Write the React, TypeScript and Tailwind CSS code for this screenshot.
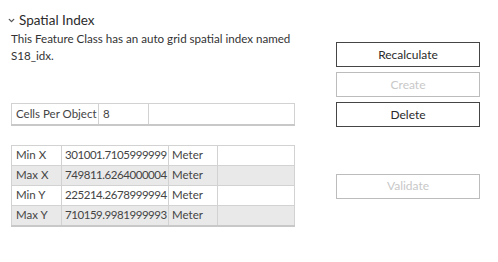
import { ChevronDown } from 'lucide-react';

const extents = [
  { label: 'Min X', value: '301001.7105999999', unit: 'Meter' },
  { label: 'Max X', value: '749811.6264000004', unit: 'Meter' },
  { label: 'Min Y', value: '225214.2678999994', unit: 'Meter' },
  { label: 'Max Y', value: '710159.9981999993', unit: 'Meter' },
];

function Btn({ label, disabled }: { label: string; disabled?: boolean }) {
  return (
    <button
      disabled={disabled}
      className={
        disabled
          ? 'h-[25px] w-[144px] border border-[#bcbcbc] bg-white text-[12px] text-[#c8c8c8]'
          : 'h-[25px] w-[144px] border border-[#454545] bg-white text-[12px] text-[#2b2b2b]'
      }
    >
      {label}
    </button>
  );
}

export default function App() {
  return (
    <div className="h-[262px] w-[498px] bg-white text-[#333] [font-family:Lato,sans-serif]">
      <div className="flex h-[30px] items-center pl-[7px] pt-[10px]">
        <ChevronDown className="h-[9px] w-[9px] text-[#555]" strokeWidth={3.5} />
        <span className="ml-[3px] text-[13.5px] leading-[18px] text-[#2b2b2b]">Spatial Index</span>
      </div>
      <div className="flex">
        <div className="ml-[11px] w-[284px]">
          <p className="h-[34px] w-[300px] text-[11.6px] leading-[17px]">
            This Feature Class has an auto grid spatial index named S18_idx.
          </p>
          <table className="mt-[39px] w-[284px] table-fixed border-collapse whitespace-nowrap text-[11.5px] text-[#444]">
            <colgroup>
              <col className="w-[87px]" />
              <col className="w-[50px]" />
              <col />
            </colgroup>
            <tbody>
              <tr className="h-[21px] border-b-2 border-[#c8c8c8]">
                <td className="border border-[#d2d2d2] pl-[4px] leading-[18px]">Cells Per Object</td>
                <td className="border border-[#d2d2d2] pl-[4px] leading-[18px]">8</td>
                <td className="border border-[#d2d2d2]"></td>
              </tr>
            </tbody>
          </table>
          <table className="mt-[19px] w-[284px] table-fixed border-collapse whitespace-nowrap text-[11.5px] text-[#444]">
            <colgroup>
              <col className="w-[50px]" />
              <col className="w-[107px]" />
              <col className="w-[49px]" />
              <col />
            </colgroup>
            <tbody>
              {extents.map((r, i) => (
                <tr
                  key={r.label}
                  className={
                    (i % 2 === 1 ? 'bg-[#e9e9e9] ' : 'bg-white ') +
                    (i === 3 ? 'h-[21px] border-b-2 border-[#c8c8c8]' : 'h-[20px]')
                  }
                >
                  <td className="border border-[#d2d2d2] pl-[4px] leading-[18px]">{r.label}</td>
                  <td className="overflow-hidden border border-[#d2d2d2] pl-[3px] leading-[18px] tracking-[-0.45px]">{r.value}</td>
                  <td className="border border-[#d2d2d2] pl-[3px] leading-[18px]">{r.unit}</td>
                  <td className="border border-[#d2d2d2]"></td>
                </tr>
              ))}
            </tbody>
          </table>
        </div>
        <div className="ml-[41px] mt-[12px] flex flex-col gap-[5px]">
          <Btn label="Recalculate" />
          <Btn label="Create" disabled />
          <Btn label="Delete" />
          <div className="mt-[40px]">
            <Btn label="Validate" disabled />
          </div>
        </div>
      </div>
    </div>
  );
}
